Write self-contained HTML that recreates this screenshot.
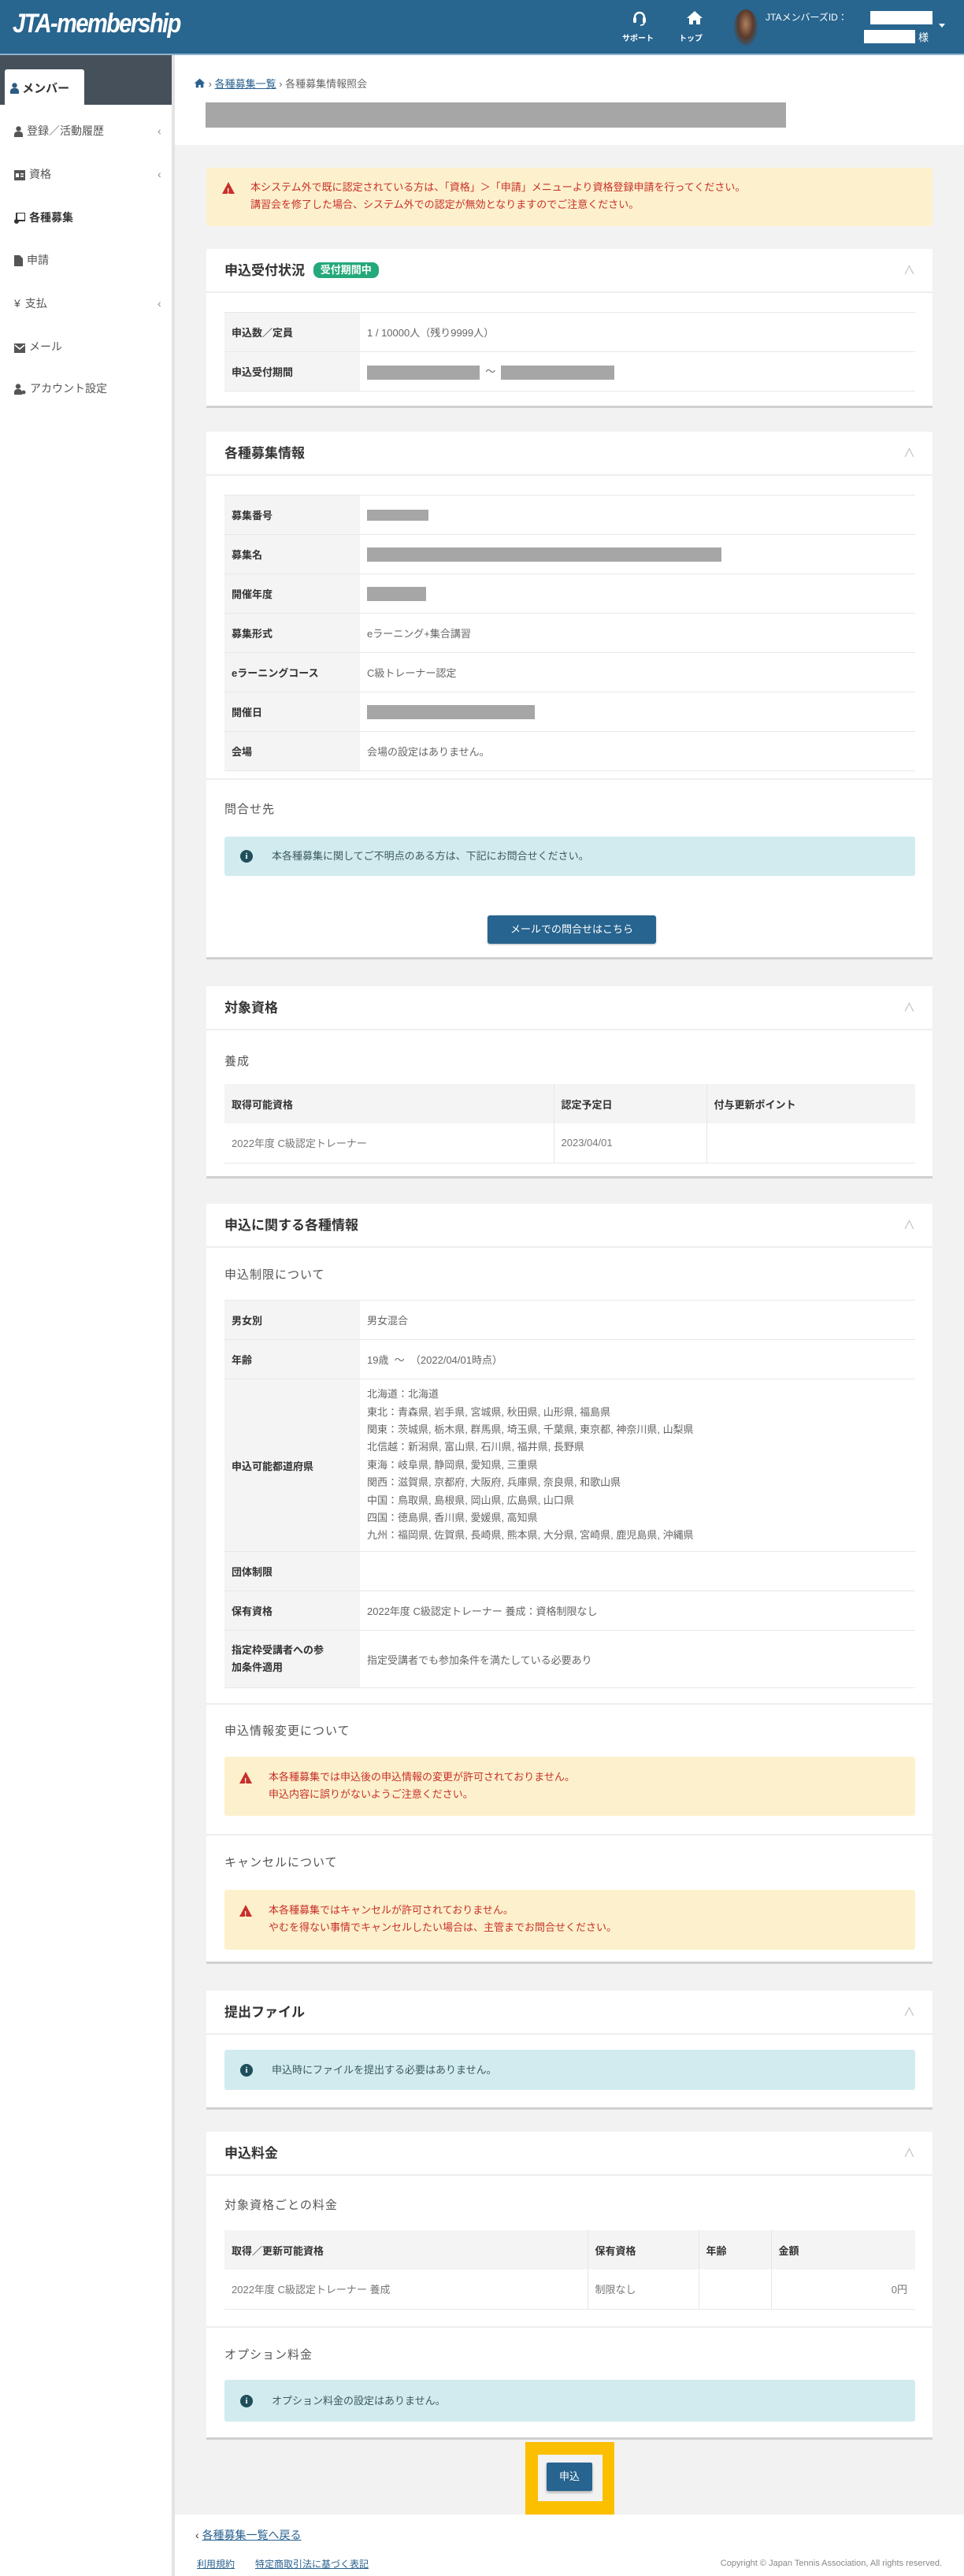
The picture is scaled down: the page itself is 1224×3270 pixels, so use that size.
<!DOCTYPE html>
<html><head><meta charset="utf-8">
<style>
*{box-sizing:border-box;margin:0;padding:0}
body{width:1224px;height:3270px;position:relative;font-family:"Liberation Sans","Noto Sans CJK JP",sans-serif;background:#f2f2f2;color:#555;font-size:14px;overflow:hidden}
.abs{position:absolute}
#hdr{left:0;top:0;width:1224px;height:70px;background:#28658f;border-bottom:2px solid #8fb3cf}
#side{left:0;top:70px;width:222px;height:3200px;background:#fff;border-right:4px solid #e3e3e3}
#topw{left:222px;top:70px;width:1002px;height:114px;background:#fff}
#foot{left:222px;top:3192px;width:1002px;height:78px;background:#fff}
.card{position:absolute;left:262px;width:922px;background:#fff;border-bottom:3px solid #d0d0d0}
.ch{height:56px;border-bottom:2px solid #eee;position:relative;padding-left:23px;line-height:56px;font-weight:bold;font-size:17px;color:#333}
.ch .car{position:absolute;right:22px;top:0;color:#bbb;font-size:15px;font-weight:normal}
table{border-collapse:collapse}
.kv{position:absolute;left:23px;width:877px}
.kv td{border-top:1px solid #e8e8e8;border-bottom:1px solid #e8e8e8;height:50px;font-size:13px;vertical-align:middle}
.kv td.l{width:172px;background:#f4f4f4;font-weight:bold;color:#333;padding-left:9px}
.kv td.v{padding-left:9px;color:#666}
.g{display:inline-block;background:#a6a6a6;height:18px;vertical-align:middle}
.sub{position:absolute;left:23px;font-size:15px;color:#555;letter-spacing:1px}
.info{position:absolute;left:23px;width:877px;background:#d2ebef;border-radius:3px;font-size:13px;color:#3b5a60;padding-left:60px}
.ii{position:absolute;left:20px;top:50%;margin-top:-8px;width:16px;height:16px;border-radius:50%;background:#1f4f5a;color:#fff;font-size:11px;font-weight:bold;text-align:center;line-height:16px;font-family:"Liberation Serif",serif}
.warn{position:absolute;background:#fcf1cc;border-radius:3px;color:#c8302a;font-size:13px;line-height:22px}
.wi{position:absolute;width:0;height:0;border-left:8px solid transparent;border-right:8px solid transparent;border-bottom:15px solid #c8302a}
.wi:after{content:"!";position:absolute;left:-2px;top:2px;color:#fff;font-size:10px;font-weight:bold}
.dv{position:absolute;left:0;width:922px;border-top:2px solid #eee}
.gt{position:absolute;left:23px;width:877px}
.gt th{background:#f4f4f4;text-align:left;font-size:13px;color:#333;height:50px;padding-left:9px;border-right:1px solid #e6e6e6}
.gt td{height:50px;padding-left:9px;font-size:13px;color:#777;border-bottom:1px solid #e8e8e8;border-right:1px solid #e6e6e6}
.gt th:last-child,.gt td:last-child{border-right:none}
.mi{position:absolute;left:18px;font-size:14px;color:#555;line-height:18px}
.mi svg{vertical-align:-3px;margin-right:5px}
.mi .ch2{position:absolute;left:182px;color:#888}
</style></head><body>

<div id="hdr" class="abs">
 <div class="abs" style="left:16px;top:11px;color:#fff;font-weight:bold;font-style:italic;font-size:34px;letter-spacing:-2px;transform:scaleX(0.86);transform-origin:left">JTA-membership</div>
 <svg class="abs" style="left:803px;top:13px" width="18" height="22" viewBox="0 0 18 22"><path d="M3 11V9a6 6 0 0 1 12 0v2" stroke="#fff" stroke-width="2.4" fill="none"/><rect x="1" y="9" width="4" height="7" rx="1.5" fill="#fff"/><rect x="13" y="9" width="4" height="7" rx="1.5" fill="#fff"/><path d="M15 15q0 4-5 4" stroke="#fff" stroke-width="1.6" fill="none"/></svg>
 <svg class="abs" style="left:871px;top:13px" width="22" height="19" viewBox="0 0 22 19"><path d="M11 1L1 10h3v8h5v-5h4v5h5v-8h3z" fill="#fff"/></svg>
 <div class="abs" style="left:790px;top:40px;color:#fff;font-size:10px;font-weight:bold">サポート</div>
 <div class="abs" style="left:862px;top:40px;color:#fff;font-size:10px;font-weight:bold">トップ</div>
 <div class="abs" style="left:932px;top:12px;width:30px;height:46px;border-radius:50%;background:radial-gradient(ellipse at 50% 40%,#b08060 0,#5a3a2a 45%,#28658f 80%)"></div>
 <div class="abs" style="left:972px;top:13px;color:#fff;font-size:12px">JTAメンバーズID：</div>
 <div class="abs" style="left:1105px;top:14px;width:79px;height:17px;background:#fff"></div>
 <div class="abs" style="left:1097px;top:38px;width:65px;height:17px;background:#fff"></div>
 <div class="abs" style="left:1166px;top:37px;color:#fff;font-size:13px">様</div>
 <div class="abs" style="left:1192px;top:30px;width:0;height:0;border-left:4px solid transparent;border-right:4px solid transparent;border-top:5px solid #fff"></div>
</div>

<div id="side" class="abs">
 <div class="abs" style="left:0;top:0;width:218px;height:63px;background:#46505a"></div>
 <div class="abs" style="left:6px;top:18px;width:101px;height:45px;background:#fff;border-radius:3px 3px 0 0;font-weight:bold;font-size:15px;color:#333;padding:13px 0 0 7px"><svg width="11" height="14" viewBox="0 0 11 14" style="vertical-align:-2px"><circle cx="5.5" cy="3.5" r="3.2" fill="#2a5b82"/><path d="M0 14v-3a4 4 0 0 1 4-4h3a4 4 0 0 1 4 4v3z" fill="#2a5b82"/></svg> メンバー</div>
 <div class="mi" style="top:87px"><svg width="11" height="14" viewBox="0 0 11 14"><circle cx="5.5" cy="3.5" r="3.2" fill="#555"/><path d="M0 14v-3a4 4 0 0 1 4-4h3a4 4 0 0 1 4 4v3z" fill="#555"/></svg>登録／活動履歴<span class="ch2">‹</span></div>
 <div class="mi" style="top:142px"><svg width="14" height="13" viewBox="0 0 14 13"><rect x="0" y="0" width="14" height="13" fill="#555"/><rect x="2" y="4" width="4" height="5" fill="#fff"/><rect x="8" y="4" width="4" height="1.5" fill="#fff"/><rect x="8" y="7" width="4" height="1.5" fill="#fff"/></svg>資格<span class="ch2">‹</span></div>
 <div class="mi" style="top:197px;font-weight:bold;color:#333"><svg width="14" height="14" viewBox="0 0 14 14"><rect x="3" y="0" width="11" height="10" fill="none" stroke="#333" stroke-width="2"/><circle cx="3" cy="11" r="3" fill="#333"/></svg>各種募集</div>
 <div class="mi" style="top:251px"><svg width="11" height="14" viewBox="0 0 11 14"><path d="M0 0h7l4 4v10H0z" fill="#555"/></svg>申請</div>
 <div class="mi" style="top:306px"><span style="margin-right:6px">¥</span>支払<span class="ch2">‹</span></div>
 <div class="mi" style="top:361px"><svg width="14" height="12" viewBox="0 0 14 12"><rect width="14" height="12" fill="#555"/><path d="M1 2l6 5 6-5" stroke="#fff" stroke-width="1.5" fill="none"/></svg>メール</div>
 <div class="mi" style="top:414px"><svg width="15" height="14" viewBox="0 0 15 14"><circle cx="5" cy="3.5" r="3.2" fill="#555"/><path d="M0 14v-3a4 4 0 0 1 4-4h2a4 4 0 0 1 4 4v3z" fill="#555"/><circle cx="12" cy="11" r="2.5" fill="#555"/></svg>アカウント設定</div>
</div>

<div id="topw" class="abs">
 <div class="abs" style="left:24px;top:26px;font-size:13px;color:#666"><svg width="15" height="13" viewBox="0 0 22 19" style="vertical-align:-1px"><path d="M11 1L1 10h3v8h5v-5h4v5h5v-8h3z" fill="#2a6190"/></svg> › <span style="color:#2a6190;text-decoration:underline">各種募集一覧</span> › 各種募集情報照会</div>
 <div class="abs" style="left:39px;top:60px;width:737px;height:32px;background:#a6a6a6"></div>
</div>

<div class="warn" style="left:262px;top:213px;width:922px;height:74px;padding:14px 0 0 56px">
 <div class="wi" style="left:20px;top:18px"></div>
 本システム外で既に認定されている方は、「資格」＞「申請」メニューより資格登録申請を行ってください。<br>講習会を修了した場合、システム外での認定が無効となりますのでご注意ください。
</div>

<div class="card" style="top:316px;height:202px">
 <div class="ch">申込受付状況 <span style="display:inline-block;background:#24a97a;color:#fff;font-size:13px;line-height:20px;padding:0 9px;border-radius:8px;vertical-align:2px;margin-left:6px">受付期間中</span><span class="car">∧</span></div>
 <table class="kv" style="top:80px">
  <tr><td class="l">申込数／定員</td><td class="v">1 / 10000人（残り9999人）</td></tr>
  <tr><td class="l">申込受付期間</td><td class="v"><span class="g" style="width:143px"></span> &nbsp;～&nbsp; <span class="g" style="width:144px"></span></td></tr>
 </table>
</div>

<div class="card" style="top:548px;height:670px">
 <div class="ch">各種募集情報<span class="car">∧</span></div>
 <table class="kv" style="top:80px">
  <tr><td class="l">募集番号</td><td class="v"><span class="g" style="width:78px;height:14px"></span></td></tr>
  <tr><td class="l">募集名</td><td class="v"><span class="g" style="width:450px"></span></td></tr>
  <tr><td class="l">開催年度</td><td class="v"><span class="g" style="width:75px"></span></td></tr>
  <tr><td class="l">募集形式</td><td class="v">eラーニング+集合講習</td></tr>
  <tr><td class="l">eラーニングコース</td><td class="v">C級トレーナー認定</td></tr>
  <tr><td class="l">開催日</td><td class="v"><span class="g" style="width:213px"></span></td></tr>
  <tr><td class="l">会場</td><td class="v">会場の設定はありません。</td></tr>
 </table>
 <div class="dv" style="top:440px"></div>
 <div class="sub" style="top:468px">問合せ先</div>
 <div class="info" style="top:514px;height:50px;line-height:50px"><span class="ii">i</span>本各種募集に関してご不明点のある方は、下記にお問合せください。</div>
 <div class="abs" style="left:357px;top:614px;width:214px;height:36px;background:#27648f;color:#fff;border-radius:3px;text-align:center;line-height:36px;font-size:13px;box-shadow:0 1px 2px rgba(0,0,0,.3)">メールでの問合せはこちら</div>
</div>

<div class="card" style="top:1252px;height:244px">
 <div class="ch">対象資格<span class="car">∧</span></div>
 <div class="sub" style="top:84px">養成</div>
 <table class="gt" style="top:124px">
  <tr><th style="width:418px">取得可能資格</th><th style="width:194px">認定予定日</th><th>付与更新ポイント</th></tr>
  <tr><td>2022年度 C級認定トレーナー</td><td>2023/04/01</td><td></td></tr>
 </table>
</div>

<div class="card" style="top:1528px;height:965px">
 <div class="ch">申込に関する各種情報<span class="car">∧</span></div>
 <div class="sub" style="top:79px">申込制限について</div>
 <table class="kv" style="top:122px">
  <tr><td class="l">男女別</td><td class="v">男女混合</td></tr>
  <tr><td class="l">年齢</td><td class="v">19歳 &nbsp;～ &nbsp;（2022/04/01時点）</td></tr>
  <tr><td class="l" style="height:219px">申込可能都道府県</td><td class="v" style="line-height:22.4px">北海道：北海道<br>東北：青森県, 岩手県, 宮城県, 秋田県, 山形県, 福島県<br>関東：茨城県, 栃木県, 群馬県, 埼玉県, 千葉県, 東京都, 神奈川県, 山梨県<br>北信越：新潟県, 富山県, 石川県, 福井県, 長野県<br>東海：岐阜県, 静岡県, 愛知県, 三重県<br>関西：滋賀県, 京都府, 大阪府, 兵庫県, 奈良県, 和歌山県<br>中国：鳥取県, 島根県, 岡山県, 広島県, 山口県<br>四国：徳島県, 香川県, 愛媛県, 高知県<br>九州：福岡県, 佐賀県, 長崎県, 熊本県, 大分県, 宮崎県, 鹿児島県, 沖縄県</td></tr>
  <tr><td class="l">団体制限</td><td class="v"></td></tr>
  <tr><td class="l">保有資格</td><td class="v">2022年度 C級認定トレーナー 養成：資格制限なし</td></tr>
  <tr><td class="l" style="height:73px;line-height:22px">指定枠受講者への参<br>加条件適用</td><td class="v">指定受講者でも参加条件を満たしている必要あり</td></tr>
 </table>
 <div class="dv" style="top:634px"></div>
 <div class="sub" style="top:658px">申込情報変更について</div>
 <div class="warn" style="left:23px;top:702px;width:877px;height:75px;padding:15px 0 0 56px"><div class="wi" style="left:19px;top:19px"></div>本各種募集では申込後の申込情報の変更が許可されておりません。<br>申込内容に誤りがないようご注意ください。</div>
 <div class="dv" style="top:800px"></div>
 <div class="sub" style="top:825px">キャンセルについて</div>
 <div class="warn" style="left:23px;top:871px;width:877px;height:76px;padding:15px 0 0 56px"><div class="wi" style="left:19px;top:19px"></div>本各種募集ではキャンセルが許可されておりません。<br>やむを得ない事情でキャンセルしたい場合は、主管までお問合せください。</div>
</div>

<div class="card" style="top:2527px;height:151px">
 <div class="ch">提出ファイル<span class="car">∧</span></div>
 <div class="info" style="top:75px;height:51px;line-height:51px"><span class="ii">i</span>申込時にファイルを提出する必要はありません。</div>
</div>

<div class="card" style="top:2706px;height:391px">
 <div class="ch">申込料金<span class="car">∧</span></div>
 <div class="sub" style="top:82px">対象資格ごとの料金</div>
 <table class="gt" style="top:125px">
  <tr><th style="width:461px">取得／更新可能資格</th><th style="width:141px">保有資格</th><th style="width:92px">年齢</th><th>金額</th></tr>
  <tr><td>2022年度 C級認定トレーナー 養成</td><td>制限なし</td><td></td><td style="text-align:right;padding-right:10px">0円</td></tr>
 </table>
 <div class="dv" style="top:247px"></div>
 <div class="sub" style="top:272px">オプション料金</div>
 <div class="info" style="top:315px;height:53px;line-height:53px"><span class="ii">i</span>オプション料金の設定はありません。</div>
</div>

<div class="abs" style="left:667px;top:3100px;width:113px;height:92px;background:#fbbf00"></div>
<div class="abs" style="left:683px;top:3116px;width:82px;height:59px;background:#f2f2f2"></div>
<div class="abs" style="left:694px;top:3126px;width:58px;height:36px;background:#27648f;color:#fff;border-radius:2px;text-align:center;line-height:36px;font-size:13px;box-shadow:0 2px 3px rgba(0,0,0,.3)">申込</div>

<div id="foot" class="abs">
 <div class="abs" style="left:26px;top:16px;font-size:14px;color:#333">‹ <span style="color:#2a6190;text-decoration:underline">各種募集一覧へ戻る</span></div>
 <div class="abs" style="left:28px;top:54px;font-size:12px;color:#2a6190;text-decoration:underline">利用規約</div>
 <div class="abs" style="left:102px;top:54px;font-size:12px;color:#2a6190;text-decoration:underline">特定商取引法に基づく表記</div>
 <div class="abs" style="right:28px;top:56px;font-size:11px;color:#888">Copyright © Japan Tennis Association, All rights reserved.</div>
</div>
</body></html>
